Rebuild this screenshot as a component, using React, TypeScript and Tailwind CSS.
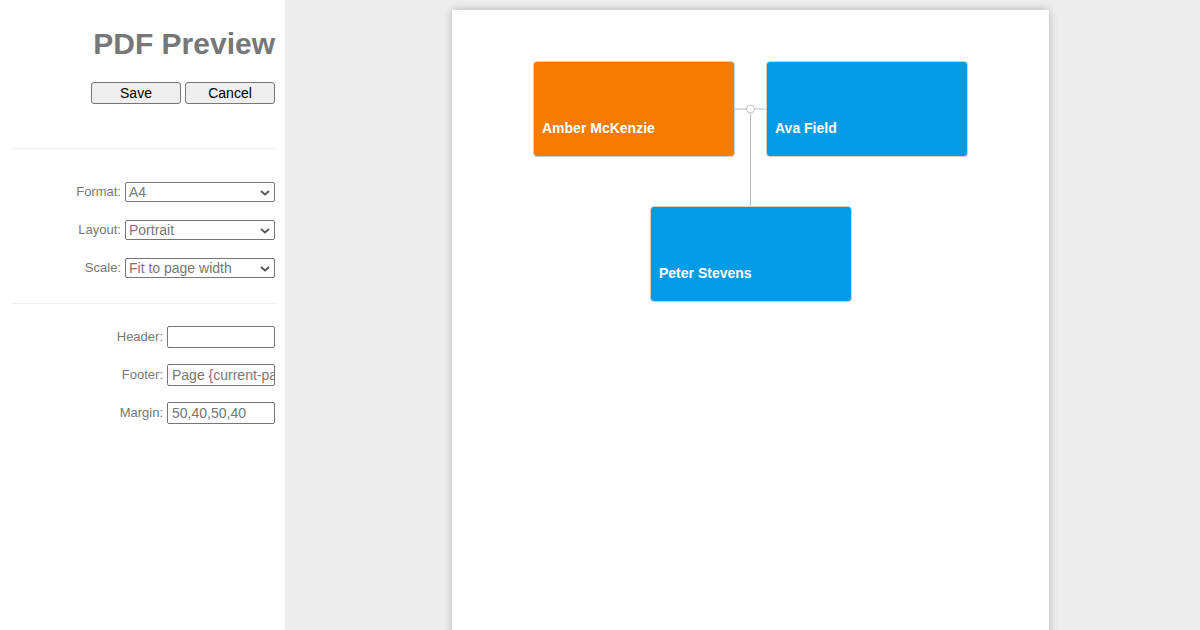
import React from "react";

const font = { fontFamily: '"Liberation Sans", Arial, sans-serif' };

function Chevron() {
  return (
    <svg width="10" height="6" viewBox="0 0 10 6" className="absolute right-[4px] top-[7px]">
      <path d="M1 1 L5 4.5 L9 1" fill="none" stroke="#555" strokeWidth="1.8" />
    </svg>
  );
}

function SelectRow({ label, value }: { label: string; value: string }) {
  return (
    <div className="flex items-center justify-end gap-[4px] h-[20px]">
      <span className="text-[13px] text-[#777]">{label}</span>
      <div className="relative w-[150px] h-[20px] border border-[#767676] rounded-[2px] bg-white">
        <span className="absolute left-[3px] top-[1px] text-[14px] text-[#777] leading-[16px]">{value}</span>
        <Chevron />
      </div>
    </div>
  );
}

function InputRow({ label, value }: { label: string; value: string }) {
  return (
    <div className="flex items-center justify-end gap-[4px] h-[22px]">
      <span className="text-[13px] text-[#777]">{label}</span>
      <div className="w-[108px] h-[22px] border border-[#767676] rounded-[2px] bg-white overflow-hidden whitespace-nowrap pl-[4px] text-[14px] leading-[20px] text-[#777]">
        {value}
      </div>
    </div>
  );
}

function Node({ name, color, left, top }: { name: string; color: string; left: number; top: number }) {
  return (
    <div
      className="absolute w-[202px] h-[96px] rounded-[4px] border border-[#d0d0d0] flex items-end pb-[20px] pl-[8px]"
      style={{ left, top, background: color }}
    >
      <span className="text-white font-bold text-[14px] leading-[16px]">{name}</span>
    </div>
  );
}

export default function App() {
  return (
    <div className="flex w-[1200px] h-[630px] overflow-hidden bg-[#ededed]" style={font}>
      <div className="w-[285px] h-full bg-white flex flex-col pl-[11px] pr-[10px] shrink-0">
        <div className="text-right text-[30px] font-bold text-[#777] mt-[26px] leading-[36px]">PDF Preview</div>
        <div className="flex justify-end gap-[4px] mt-[20px]">
          <button className="w-[90px] h-[22px] border border-[#767676] rounded-[3px] bg-[#efefef] text-[14px] text-black leading-[20px]">Save</button>
          <button className="w-[90px] h-[22px] border border-[#767676] rounded-[3px] bg-[#efefef] text-[14px] text-black leading-[20px]">Cancel</button>
        </div>
        <div className="h-px bg-[#eeeeee] mt-[44px]" />
        <div className="flex flex-col gap-[18px] mt-[33px]">
          <SelectRow label="Format:" value="A4" />
          <SelectRow label="Layout:" value="Portrait" />
          <SelectRow label="Scale:" value="Fit to page width" />
        </div>
        <div className="h-px bg-[#eeeeee] mt-[25px]" />
        <div className="flex flex-col gap-[16px] mt-[22px]">
          <InputRow label="Header:" value="" />
          <InputRow label="Footer:" value="Page {current-page}" />
          <InputRow label="Margin:" value="50,40,50,40" />
        </div>
      </div>
      <div className="flex-1 flex justify-start pt-[10px] pl-[167px]">
        <div className="relative w-[597px] h-[700px] bg-white shadow-[0_0_8px_rgba(0,0,0,0.25)]">
          <svg className="absolute left-0 top-0" width="597" height="400">
            <line x1="283" y1="99" x2="314" y2="99" stroke="#bdbdbd" strokeWidth="1" />
            <line x1="298.5" y1="103" x2="298.5" y2="196" stroke="#bdbdbd" strokeWidth="1" />
            <circle cx="298.5" cy="99" r="4" fill="white" stroke="#bdbdbd" strokeWidth="1" />
          </svg>
          <Node name="Amber McKenzie" color="#f57c00" left={81} top={51} />
          <Node name="Ava Field" color="#039be5" left={314} top={51} />
          <Node name="Peter Stevens" color="#039be5" left={198} top={196} />
        </div>
      </div>
    </div>
  );
}
